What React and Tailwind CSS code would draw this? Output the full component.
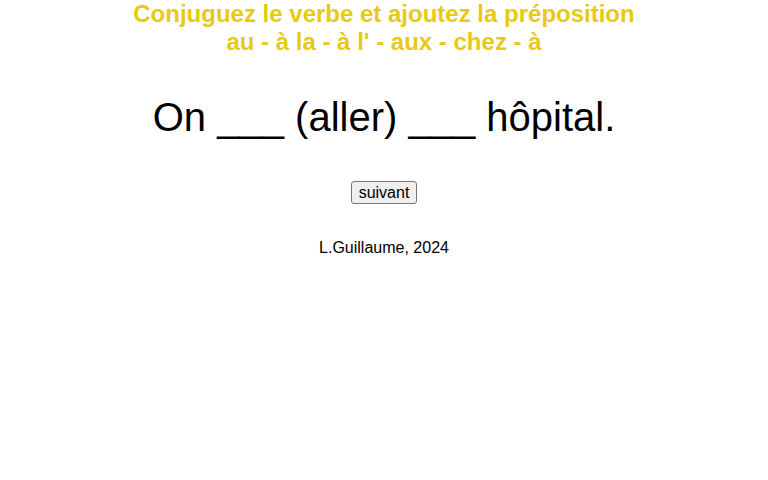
export default function App() {
  return (
    <div className="flex flex-col items-center text-center text-black" style={{ fontFamily: '"Liberation Sans", Arial, sans-serif' }}>
      <div className="text-[24px] leading-[28px] font-bold text-[#e8c916]">
        <div>Conjuguez le verbe et ajoutez la préposition</div>
        <div>au - à la - à l' - aux - chez - à</div>
      </div>
      <div className="mt-[38px] text-[40px] leading-[46px]">On ___ (aller) ___ hôpital.</div>
      <button className="mt-[41px] px-[7px] h-[23px] text-[16px] leading-[19px] bg-[#efefef] border border-[#767676] rounded-[3px] text-black">suivant</button>
      <div className="mt-[35px] text-[16px] leading-[18px]">L.Guillaume, 2024</div>
    </div>
  );
}
